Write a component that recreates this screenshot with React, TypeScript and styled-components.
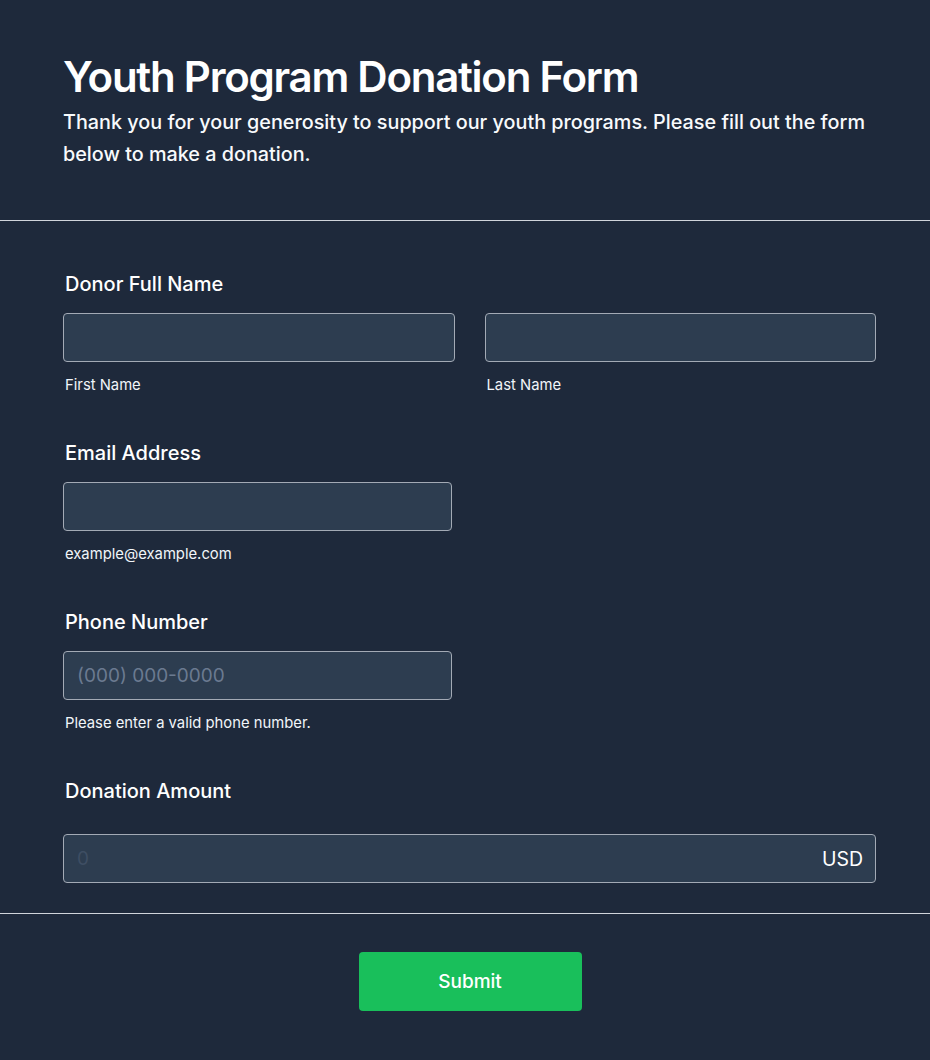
import React from "react";
import styled, { createGlobalStyle } from "styled-components";

const Global = createGlobalStyle`
  html, body {
    margin: 0;
    padding: 0;
    background: #1e293b;
  }
  body {
    font-family: Inter, "Noto Sans", sans-serif;
    color: #ffffff;
  }
  * { box-sizing: border-box; }
`;

const Page = styled.div`
  width: 930px;
  min-height: 1060px;
  background: #1e293b;
`;

const Header = styled.header`
  padding: 52px 54px 50px 63px;
  border-bottom: 1px solid #d1d5db;
`;

const Title = styled.h1`
  margin: 0;
  font-size: 42px;
  line-height: 50px;
  font-weight: 600;
  letter-spacing: -1.25px;
  color: #ffffff;
`;

const Subtitle = styled.p`
  margin: 4px 0 0;
  font-size: 19.8px;
  line-height: 32px;
  font-weight: 500;
  color: #f8fafc;
`;

const Form = styled.form`
  padding: 49px 54px 30px 63px;
  display: flex;
  flex-direction: column;
  gap: 44px;
  border-bottom: 1px solid #d1d5db;
`;

const Field = styled.div`
  display: flex;
  flex-direction: column;
`;

const Label = styled.label<{ $gap?: number }>`
  padding-left: 2px;
  font-size: 20px;
  line-height: 28px;
  font-weight: 500;
  color: #ffffff;
  margin-bottom: ${(p) => p.$gap ?? 15}px;
`;

const Row = styled.div`
  display: grid;
  grid-template-columns: 1fr 1fr;
  column-gap: 30px;
`;

const Cell = styled.div<{ $width?: number }>`
  display: flex;
  flex-direction: column;
  width: ${(p) => (p.$width ? `${p.$width}px` : "auto")};
`;

const Input = styled.input`
  width: 100%;
  height: 49px;
  padding: 0 13px;
  background: #2d3d50;
  border: 1px solid #a3aab5;
  border-radius: 4px;
  font-family: Inter, "Noto Sans", sans-serif;
  font-size: 19px;
  color: #ffffff;
  outline: none;
  &::placeholder {
    color: #6b7a90;
  }
`;

const Hint = styled.span`
  padding-left: 2px;
  margin-top: 13px;
  font-size: 14.8px;
  line-height: 20px;
  color: #f1f5f9;
`;

const AmountBox = styled.div`
  display: flex;
  align-items: center;
  height: 49px;
  padding: 0 12px 0 13px;
  background: #2d3d50;
  border: 1px solid #a3aab5;
  border-radius: 4px;
`;

const AmountInput = styled.input`
  flex: 1;
  min-width: 0;
  background: transparent;
  border: none;
  outline: none;
  font-family: Inter, "Noto Sans", sans-serif;
  font-size: 19px;
  color: #ffffff;
  padding: 0;
  &::placeholder {
    color: #3e4e63;
  }
`;

const Currency = styled.span`
  font-size: 19.5px;
  font-weight: 400;
  color: #ffffff;
`;

const Footer = styled.div`
  display: flex;
  justify-content: center;
  padding: 38px 53px 0 63px;
`;

const SubmitButton = styled.button`
  width: 223px;
  height: 59px;
  border: none;
  border-radius: 4px;
  background: #19bf5b;
  color: #ffffff;
  font-family: Inter, "Noto Sans", sans-serif;
  font-size: 19px;
  font-weight: 500;
  cursor: pointer;
`;

export default function App() {
  return (
    <Page>
      <Global />
      <Header>
        <Title>Youth Program Donation Form</Title>
        <Subtitle>
          Thank you for your generosity to support our youth programs. Please fill out the form
          below to make a donation.
        </Subtitle>
      </Header>
      <Form onSubmit={(e) => e.preventDefault()}>
        <Field>
          <Label>Donor Full Name</Label>
          <Row>
            <Cell>
              <Input type="text" aria-label="First Name" />
              <Hint>First Name</Hint>
            </Cell>
            <Cell>
              <Input type="text" aria-label="Last Name" />
              <Hint>Last Name</Hint>
            </Cell>
          </Row>
        </Field>
        <Field>
          <Label>Email Address</Label>
          <Cell $width={389}>
            <Input type="email" aria-label="Email Address" />
            <Hint>example@example.com</Hint>
          </Cell>
        </Field>
        <Field>
          <Label>Phone Number</Label>
          <Cell $width={389}>
            <Input type="tel" placeholder="(000) 000-0000" aria-label="Phone Number" />
            <Hint>Please enter a valid phone number.</Hint>
          </Cell>
        </Field>
        <Field>
          <Label $gap={29}>Donation Amount</Label>
          <AmountBox>
            <AmountInput type="text" placeholder="0" aria-label="Donation Amount" />
            <Currency>USD</Currency>
          </AmountBox>
        </Field>
      </Form>
      <Footer>
        <SubmitButton type="submit">Submit</SubmitButton>
      </Footer>
    </Page>
  );
}
